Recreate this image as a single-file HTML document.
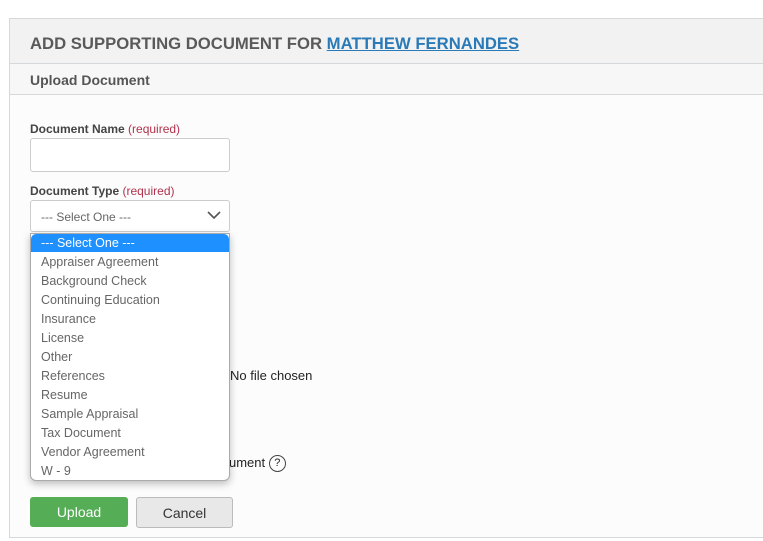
<!DOCTYPE html>
<html><head><style>
body{margin:0;background:#fff;font-family:"Liberation Sans",sans-serif;width:763px;height:541px;overflow:hidden;position:relative}
.panel{position:absolute;left:9px;top:18px;width:760px;height:518px;border:1px solid #d6d9db;background:#fcfcfc}
.h1{height:44px;background:#f2f2f2;border-bottom:1px solid #d6d9db;font-size:16.7px;font-weight:bold;color:#5a5a5a;padding-left:20px;line-height:49px}
.h1 a{color:#2a7ab8;text-decoration:underline}
.h2{height:30px;background:#f7f7f7;border-bottom:1px solid #d6d9db;font-size:14px;font-weight:bold;color:#555;padding-left:20px;line-height:32px}
.lbl{position:absolute;left:30px;font-size:12px;font-weight:bold;color:#444}
.lbl span{color:#b0334d;font-weight:normal}
.inp{position:absolute;left:30px;width:198px;border:1px solid #ccc;border-radius:3px;background:#fff}
.dd{position:absolute;left:30px;top:233px;width:198px;height:246px;border:1px solid #aaa;border-radius:0 0 6px 6px;background:#fff;box-shadow:0 3px 8px rgba(0,0,0,.25);font-size:12.5px;color:#666}
.dd div{height:19px;line-height:21px;padding-left:10px}
.dd .sel{background:#1e90ff;color:#fff;border-radius:5px 5px 0 0;height:18px;line-height:19px}
.btn{position:absolute;top:497px;height:29px;border-radius:3px;font-size:14px;text-align:center;line-height:30px}
</style></head><body>
<div class="panel">
<div class="h1">ADD SUPPORTING DOCUMENT FOR <a>MATTHEW FERNANDES</a></div>
<div class="h2">Upload Document</div>
</div>
<div class="lbl" style="top:122px">Document Name <span>(required)</span></div>
<div class="inp" style="top:138px;height:32px"></div>
<div class="lbl" style="top:184px">Document Type <span>(required)</span></div>
<div class="inp" style="top:200px;height:30px;font-size:12px;color:#666;line-height:32px;text-indent:10px">--- Select One ---
<svg style="position:absolute;right:8px;top:10px" width="14" height="9"><path d="M1 1L7 7L13 1" stroke="#555" stroke-width="1.6" fill="none"/></svg></div>
<div style="position:absolute;left:230px;top:368px;font-size:13px;color:#222">No file chosen</div>
<div style="position:absolute;left:229px;top:455px;font-size:13px;color:#222">ument <span style="display:inline-block;width:15px;height:15px;border:1px solid #444;border-radius:50%;text-align:center;line-height:15px;font-size:11px;vertical-align:1px">?</span></div>
<div style="position:absolute;left:30px;top:396px;width:2px;height:12px;background:#555"></div>
<div style="position:absolute;left:30px;top:424px;width:2px;height:12px;background:#555"></div>
<div class="dd">
<div class="sel">--- Select One ---</div>
<div>Appraiser Agreement</div><div>Background Check</div><div>Continuing Education</div><div>Insurance</div><div>License</div><div>Other</div><div>References</div><div>Resume</div><div>Sample Appraisal</div><div>Tax Document</div><div>Vendor Agreement</div><div>W - 9</div>
</div>
<div class="btn" style="left:30px;width:98px;background:#55ae55;color:#fff;border:0;height:30px">Upload</div>
<div class="btn" style="left:136px;width:95px;background:#e8e8e8;border:1px solid #bbb;color:#333">Cancel</div>
</body></html>
